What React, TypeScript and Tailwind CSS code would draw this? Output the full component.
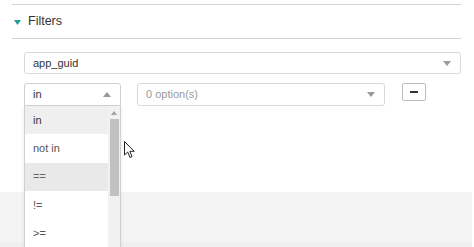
import React from "react";

const Caret = ({ up = false }: { up?: boolean }) => (
  <svg width="8" height="5" viewBox="0 0 8 5" className="block">
    {up ? <path d="M0 5 L4 0 L8 5 Z" fill="#999" /> : <path d="M0 0 L8 0 L4 5 Z" fill="#999" />}
  </svg>
);

export default function App() {
  const items = ["in", "not in", "==", "!=", ">="];
  return (
    <div className="relative w-[474px] h-[247px] overflow-hidden bg-white text-[#333] font-['Liberation_Sans',Arial,sans-serif]">
      <div className="ml-[12px] w-[449px] h-[5px] border-b border-[#d4d4d4]" />
      <div className="ml-[12px] w-[449px] h-[34px] flex items-center border-b border-[#d4d4d4]">
        <svg width="7" height="5" viewBox="0 0 7 5" className="ml-[2px] mt-[1px]">
          <path d="M0 0 L7 0 L3.5 5 Z" fill="#1f9e9a" />
        </svg>
        <span className="ml-[7px] text-[12.5px] text-[#333]">Filters</span>
      </div>
      <div className="pl-[24px] pt-[13px]">
        <div className="w-[437px] h-[22px] border border-[#d9d9d9] rounded-[3px] flex items-center justify-between pl-[8px] pr-[9px]">
          <span className="text-[11px] text-[#333]">app_guid</span>
          <Caret />
        </div>
        <div className="mt-[9px] flex items-start">
          <div className="w-[97px] h-[23px] border border-[#d0d0d0] rounded-t-[3px] flex items-center justify-between pl-[8px] pr-[9px]">
            <span className="text-[11px] text-[#333]">in</span>
            <Caret up />
          </div>
          <div className="ml-[16px] w-[248px] h-[23px] border border-[#d9d9d9] rounded-[3px] flex items-center justify-between pl-[8px] pr-[9px]">
            <span className="text-[11px] text-[#999]">0 option(s)</span>
            <Caret />
          </div>
          <button className="ml-[17px] w-[24px] h-[18px] border border-[#bdbdbd] rounded-[2px] bg-white flex items-center justify-center">
            <span className="block w-[8px] h-[2px] bg-[#333]" />
          </button>
        </div>
      </div>
      <div className="mt-[86px] w-[472px] h-[55px] bg-[#f4f4f4] border-b-[5px] border-[#f0f0f0]" />

      <div className="absolute left-[24px] top-[106px] w-[97px] h-[141px] bg-white border-l border-r border-[#d0d0d0] flex shadow-[0_2px_4px_rgba(0,0,0,0.08)]">
        <div className="flex-1 flex flex-col">
          {items.map((t, i) => (
            <div
              key={t}
              className={`h-[28.3px] shrink-0 flex items-center pl-[8px] text-[11px] ${
                i === 0 ? "bg-[#efefef] text-[#333]" : i === 2 ? "bg-[#e9e9e9] text-[#666]" : "text-[#555]"
              }`}
            >
              {t}
            </div>
          ))}
        </div>
        <div className="w-[12px] bg-[#f1f1f1] flex flex-col items-center">
          <svg width="6" height="4" viewBox="0 0 6 4" className="mt-[5px]">
            <path d="M0 4 L3 0 L6 4 Z" fill="#a3a3a3" />
          </svg>
          <div className="mt-[4px] w-[9px] h-[77px] bg-[#c1c1c1]" />
        </div>
      </div>

      <svg className="absolute left-[124px] top-[141px]" width="12" height="18" viewBox="0 0 12 18">
        <path d="M0.5 0.5 L0.5 14 L3.7 11 L6 16.5 L8 15.6 L5.8 10.3 L10.2 10.3 Z" fill="white" stroke="#222" strokeWidth="1" strokeLinejoin="round" />
      </svg>
    </div>
  );
}
